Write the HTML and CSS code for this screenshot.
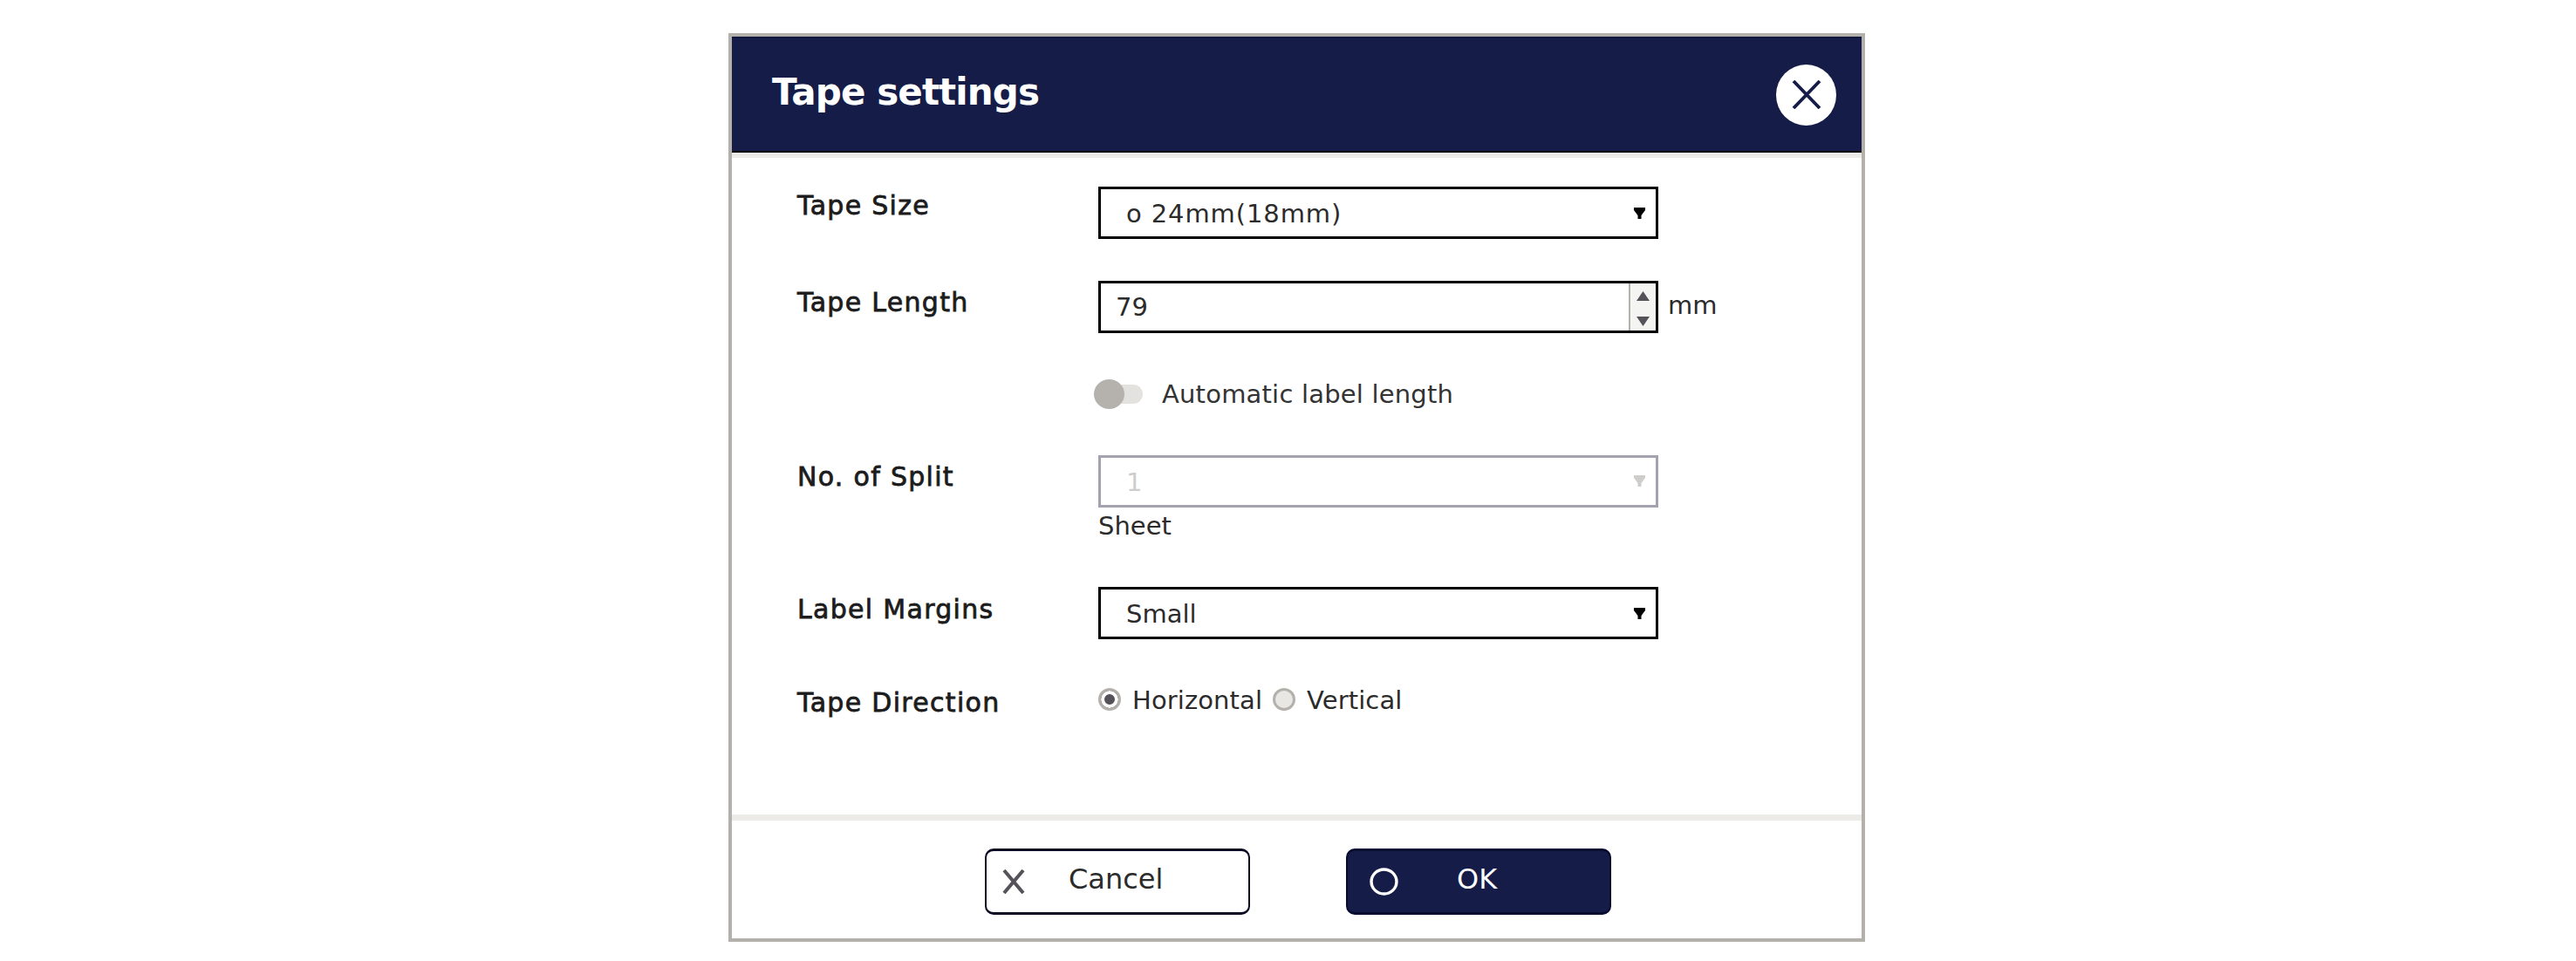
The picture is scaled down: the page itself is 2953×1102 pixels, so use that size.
FILE: index.html
```html
<!DOCTYPE html>
<html lang="en">
<head>
    <meta charset="UTF-8">
    <meta name="viewport" content="width=device-width, initial-scale=1.0">
    <title>Tape settings</title>

    <link rel="stylesheet" href="styles.css">
</head>
<body>
    <div class="dialog">
        <div class="dialog-header">
            <h2>Tape settings</h2>
            <button class="close-btn" type="button" aria-label="Close">
                <svg width="34" height="33" viewBox="0 0 34 33"><path d="M2 1 32 32M32 1 2 32" fill="none" stroke="#141c47" stroke-width="3.8"/></svg>
            </button>
        </div>

        <div class="dialog-body">
            <div class="row row-size">
                <label class="field-label">Tape Size</label>
                <div class="select-wrap wide-text">
                    <select>
                        <option>o 24mm(18mm)</option>
                    </select>
                    <svg class="arrow" width="13" height="14" viewBox="0 0 13 14"><path d="M0 0H13V3L8.500 9V13H4.500V9L0 3Z" fill="#000"/></svg>
                </div>
            </div>

            <div class="row row-length">
                <label class="field-label">Tape Length</label>
                <div class="number-wrap">
                    <input type="text" value="79">
                    <div class="spin">
                        <svg width="15" height="11" viewBox="0 0 15 11"><path d="M7.5 0 15 11H0Z" fill="#55525a"/></svg>
                        <svg width="15" height="11" viewBox="0 0 15 11"><path d="M0 0H15L7.5 11Z" fill="#55525a"/></svg>
                    </div>
                </div>
                <span class="unit">mm</span>
            </div>

            <div class="row row-auto">
                <span class="toggle"><span class="toggle-thumb"></span></span>
                <span class="toggle-text">Automatic label length</span>
            </div>

            <div class="row row-split">
                <label class="field-label">No. of Split</label>
                <div>
                    <div class="select-wrap disabled">
                        <select disabled>
                            <option>1</option>
                        </select>
                        <svg class="arrow" width="13" height="14" viewBox="0 0 13 14"><path d="M0 0H13V3L8.500 9V13H4.500V9L0 3Z" fill="#cfcdcb"/></svg>
                    </div>
                    <div class="sheet">Sheet</div>
                </div>
            </div>

            <div class="row row-margins">
                <label class="field-label">Label Margins</label>
                <div class="select-wrap">
                    <select>
                        <option>Small</option>
                    </select>
                    <svg class="arrow" width="13" height="14" viewBox="0 0 13 14"><path d="M0 0H13V3L8.500 9V13H4.500V9L0 3Z" fill="#000"/></svg>
                </div>
            </div>

            <div class="row row-direction">
                <label class="field-label">Tape Direction</label>
                <div class="radios">
                    <span class="radio checked"></span>
                    <span class="radio-text">Horizontal</span>
                    <span class="radio"></span>
                    <span class="radio-text">Vertical</span>
                </div>
            </div>
        </div>

        <div class="dialog-footer">
            <button class="btn btn-cancel" type="button">
                <svg width="26" height="28" viewBox="0 0 26 28"><path d="M2 1 24 27M24 1 2 27" fill="none" stroke="#55525a" stroke-width="4"/></svg>
                <span>Cancel</span>
            </button>
            <button class="btn btn-ok" type="button">
                <svg width="33" height="32" viewBox="0 0 33 32"><ellipse cx="16.5" cy="16" rx="14.5" ry="14" fill="none" stroke="#fff" stroke-width="3.4"/></svg>
                <span>OK</span>
            </button>
        </div>
    </div>
</body>
</html>
```

FILE: styles.css
```css
body {
    font-family: "DejaVu Sans", sans-serif;
    background-color: #fff;
    margin: 0;
    padding: 0;
}

.dialog {
    box-sizing: border-box;
    width: 1303px;
    height: 1042px;
    margin: 38px 0 0 835px;
    border: 4px solid #b4b1ad;
    background-color: #fff;
    display: flex;
    flex-direction: column;
}

.dialog-header {
    box-sizing: border-box;
    height: 133px;
    flex: none;
    background-color: #141c47;
    border-top: 2px solid #10173d;
    border-bottom: 2px solid #000;
    padding: 0 29px 0 46px;
    display: flex;
    justify-content: space-between;
    align-items: center;
}

.dialog-header h2 {
    margin: 0 0 6px 0;
    color: #fff;
    font-size: 42px;
    font-weight: bold;
    letter-spacing: -0.9px;
}

.close-btn {
    width: 69px;
    height: 70px;
    padding: 0;
    border: none;
    border-radius: 50%;
    background-color: #fff;
    display: flex;
    justify-content: center;
    align-items: center;
}

.dialog-body {
    flex: 1;
    border-top: 6px solid #ecebe7;
    padding: 33px 0 0 75px;
}

.row {
    display: flex;
    align-items: flex-start;
    color: #2b2b2b;
    font-size: 29px;
}

.field-label {
    width: 345px;
    flex: none;
    font-size: 30px;
    line-height: 40px;
    color: #1c1c1c;
    letter-spacing: 1.3px;
    -webkit-text-stroke: 0.8px #1c1c1c;
}

.row-size .field-label { margin-top: 2px; }
.row-length { margin-top: 48px; }
.row-length .field-label { margin-top: 5px; }
.row-auto { margin-top: 53px; margin-left: 340px; align-items: center; height: 34px; }
.row-split { margin-top: 53px; }
.row-split .field-label { margin-top: 5px; }
.row-margins { margin-top: 50px; }
.row-margins .field-label { margin-top: 6px; }
.row-direction { margin-top: 56px; }
.row-direction .field-label { margin-top: -3px; }

.select-wrap {
    position: relative;
    width: 642px;
    height: 60px;
}

.select-wrap select {
    box-sizing: border-box;
    width: 100%;
    height: 100%;
    appearance: none;
    border: 3px solid #000;
    border-radius: 0;
    background-color: #fff;
    padding: 2px 0 0 29px;
    font-family: inherit;
    font-size: 29px;
    color: #2b2b2b;
}

.select-wrap.wide-text select {
    letter-spacing: 0.9px;
}

.select-wrap .arrow {
    position: absolute;
    top: 24px;
    right: 15px;
}

.select-wrap.disabled select {
    border-color: #a3a2ae;
    color: #cfcdcb;
    opacity: 1;
}

.select-wrap.disabled .arrow {
    top: 23px;
}

.number-wrap {
    box-sizing: border-box;
    width: 642px;
    height: 60px;
    border: 3px solid #000;
    display: flex;
}

.number-wrap input {
    flex: 1;
    min-width: 0;
    border: none;
    outline: none;
    padding: 0 0 0 17px;
    font-family: inherit;
    font-size: 29px;
    color: #2b2b2b;
}

.spin {
    width: 31px;
    flex: none;
    border-left: 2px solid #b4b1ad;
    background-color: #f4f4f3;
    display: flex;
    flex-direction: column;
    justify-content: space-between;
    align-items: center;
    padding: 9px 0 5px 0;
    box-sizing: border-box;
}

.unit {
    margin-left: 11px;
    line-height: 56px;
}

.toggle {
    position: relative;
    width: 56px;
    height: 22px;
    border-radius: 11px;
    background-color: #e4e2df;
    flex: none;
}

.toggle-thumb {
    position: absolute;
    top: -6px;
    left: 0;
    width: 35px;
    height: 34px;
    border-radius: 50%;
    background-color: #b5b1ad;
}

.toggle-text {
    margin-left: 22px;
    color: #333;
    letter-spacing: 0.2px;
}

.sheet {
    line-height: 40px;
    margin-top: 1px;
}

.radios {
    display: flex;
    align-items: center;
    height: 26px;
}

.radio {
    box-sizing: border-box;
    width: 26px;
    height: 26px;
    border-radius: 50%;
    border: 3px solid #b4b1ad;
    background-color: #e8e7e4;
    flex: none;
}

.radio.checked {
    background-color: #55525a;
    box-shadow: inset 0 0 0 4px #fff;
}

.radio-text {
    margin: 0 12px 0 13px;
    padding-top: 2px;
    letter-spacing: 0.1px;
}

.dialog-footer {
    flex: none;
    height: 142px;
    box-sizing: border-box;
    border-top: 7px solid #ecebe7;
    padding: 32px 0 0 290px;
    display: flex;
    align-items: flex-start;
    gap: 110px;
}

.btn {
    box-sizing: border-box;
    width: 304px;
    height: 76px;
    border-style: solid;
    border-width: 3px 2px;
    border-radius: 10px;
    padding: 0;
    font-family: inherit;
    font-size: 32px;
    display: flex;
    align-items: center;
}

.btn-cancel {
    background-color: #fff;
    border-color: #0a0a22;
    color: #2b2b2b;
    padding-left: 18px;
}

.btn-cancel span {
    margin-left: 50px;
    margin-bottom: 6px;
}

.btn-ok {
    background-color: #141c47;
    border-color: #070b30;
    color: #fff;
    padding-left: 25px;
}

.btn-ok span {
    margin-left: 67px;
    margin-bottom: 6px;
}
```
